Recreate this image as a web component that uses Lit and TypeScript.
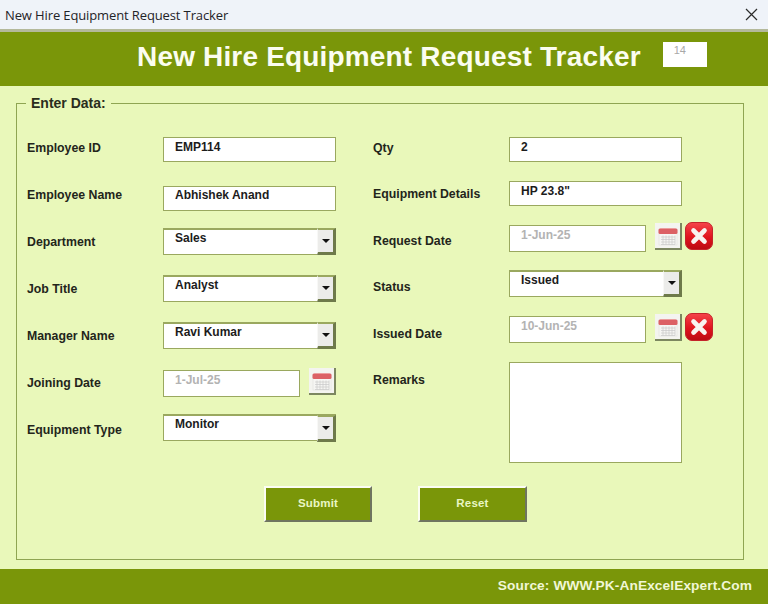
import { LitElement, html, css, svg } from "lit";
import { customElement } from "lit/decorators.js";

type Kind = "text" | "select" | "date" | "date-x" | "area";
interface Field { label: string; value: string; kind: Kind; gap: number; labelTop: number; textTop: number; }

const left: Field[] = [
  { label: "Employee ID", value: "EMP114", kind: "text", gap: 0, labelTop: 3, textTop: 1 },
  { label: "Employee Name", value: "Abhishek Anand", kind: "text", gap: 24, labelTop: 1, textTop: 0 },
  { label: "Department", value: "Sales", kind: "select", gap: 17, labelTop: 6, textTop: 0 },
  { label: "Job Title", value: "Analyst", kind: "select", gap: 20, labelTop: 6, textTop: 0 },
  { label: "Manager Name", value: "Ravi Kumar", kind: "select", gap: 20, labelTop: 6, textTop: 0 },
  { label: "Joining Date", value: "1-Jul-25", kind: "date", gap: 21, labelTop: 5, textTop: 1 },
  { label: "Equipment Type", value: "Monitor", kind: "select", gap: 17, labelTop: 8, textTop: -1 },
];
const right: Field[] = [
  { label: "Qty", value: "2", kind: "text", gap: 0, labelTop: 3, textTop: 1 },
  { label: "Equipment Details", value: 'HP 23.8"', kind: "text", gap: 19, labelTop: 5, textTop: 1 },
  { label: "Request Date", value: "1-Jun-25", kind: "date-x", gap: 19, labelTop: 8, textTop: 1 },
  { label: "Status", value: "Issued", kind: "select", gap: 18, labelTop: 9, textTop: 0 },
  { label: "Issued Date", value: "10-Jun-25", kind: "date-x", gap: 19, labelTop: 10, textTop: 1 },
  { label: "Remarks", value: "", kind: "area", gap: 19, labelTop: 10, textTop: 0 },
];

const calendar = svg`<svg viewBox="0 0 27 27" width="27" height="27">
  <rect x="5" y="7" width="18" height="16" fill="#f6f6f3" stroke="#dcdcd8" stroke-width=".5"/>
  <rect x="4.500" y="6.500" width="19" height="5.500" rx="1.500" fill="#dc6165"/>
  <path d="M6.500 6.500h15" stroke="#ec9a9b" stroke-width=".8"/>
  <path d="M7 15h14M7 17.500h14M7 20h14M7 22.500h14M9 13.500v9M12 13.500v9M15 13.500v9M18 13.500v9M21 13.500v9" stroke="#c8c8c8" stroke-width=".7" fill="none"/>
</svg>`;

const closeX = svg`<svg viewBox="0 0 28 28" width="28" height="28">
  <defs><linearGradient id="rx" x1="0" y1="0" x2="0" y2="1">
    <stop offset="0" stop-color="#f5444a"/><stop offset=".55" stop-color="#e0141d"/><stop offset="1" stop-color="#bb0a13"/>
  </linearGradient></defs>
  <rect x=".5" y=".5" width="27" height="27" rx="6.500" fill="url(#rx)" stroke="#c4242a"/>
  <path d="M8.500 8.500l11 11M19.500 8.500l-11 11" stroke="#f8f3f0" stroke-width="4.600" stroke-linecap="round"/>
</svg>`;

@customElement("app-root")
export class AppRoot extends LitElement {
  static styles = css`
    :host {
      display: flex; flex-direction: column; width: 768px; height: 604px; overflow: hidden;
      background: #e9f8ba; font-family: "Liberation Sans", Arial, sans-serif; color: #1c1c1c;
    }
    .titlebar {
      flex: none; height: 29px; background: #eff3f9; display: flex; align-items: center;
      justify-content: space-between; padding: 0 10px 0 5px; box-sizing: border-box;
      font: 13px/18px "Open Sans", "Noto Sans", sans-serif; color: #1f2328;
      letter-spacing: -0.12px;
    }
    .titlebar svg { display: block; }
    .rule { flex: none; height: 3px; background: #b4b99b; }
    .header {
      flex: none; height: 54px; background: #7a9609; display: flex; align-items: flex-start;
      padding: 10px 0 0 137px; box-sizing: border-box;
    }
    .header h1 {
      margin: 0; font-size: 28px; line-height: 30px; font-weight: 700; color: #fbfdf0;
      letter-spacing: 0.17px; white-space: nowrap;
    }
    .counter {
      width: 44px; height: 25px; margin-left: 22px; background: #fff; box-sizing: border-box;
      padding: 2px 0 0 11px; font-size: 11px; line-height: 13px; color: #a8a8a8;
    }
    .main { flex: 1; padding: 9px 24px 9px 16px; display: flex; min-height: 0; }
    fieldset {
      flex: 1; margin: 0; border: 1px solid #8fa552; padding: 26px 0 0 10px; min-width: 0;
      box-sizing: border-box;
    }
    legend {
      margin-left: -1px; padding: 0 5px; font-size: 14px; line-height: 16px; font-weight: 700;
      color: #2a2d1c;
    }
    .cols { display: flex; align-items: flex-start; }
    .col { width: 346px; display: flex; flex-direction: column; flex: none; }
    .row { display: flex; align-items: flex-start; }
    .label {
      width: 136px; flex: none; font-size: 12.300px; line-height: 16px; font-weight: 700;
      color: #23251b; white-space: nowrap; height: 16px; margin-bottom: -16px;
    }
    .box {
      box-sizing: border-box; background: #fff; border: 1px solid #9aa85f; height: 25px; width: 173px;
      padding: 0 0 0 11px; font-size: 12px; line-height: 16px; font-weight: 700; color: #1c1c1c;
      white-space: nowrap;
    }
    .select {
      height: 27px; display: flex; justify-content: space-between;
      border-top-width: 2px;
    }
    .arrow {
      width: 19px; height: 27px; flex: none; margin: -2px -1px 0 0; box-sizing: border-box;
      background: #ececea; border-right: 3px solid #6e7a4a; border-bottom: 3px solid #6e7a4a;
      border-left: 1px solid #f8f8f6; border-top: 2px solid #9aa85f;
      display: flex; align-items: center; justify-content: center;
    }
    .arrow i {
      display: block; width: 0; height: 0; border: 4px solid transparent; border-top: 4px solid #111;
      border-bottom-width: 0;
    }
    .date { width: 137px; height: 27px; color: #b3b3b3; }
    .controls { display: flex; align-items: flex-start; }
    .cal {
      width: 27px; height: 27px; margin: -2px 0 0 9px; flex: none; box-sizing: border-box;
      background: #f4f4f0; border-right: 2px solid #7c8760; border-bottom: 2px solid #7c8760;
      display: flex; overflow: hidden;
    }
    .cal svg { display: block; flex: none; margin: -1px; }
    .xbtn { margin: -3px 0 0 3px; width: 28px; height: 28px; flex: none; }
    .xbtn svg { display: block; }
    .area { height: 101px; }
    .actions { display: flex; gap: 46px; padding: 23px 0 0 237px; }
    button {
      width: 108px; height: 36px; box-sizing: border-box; background: #7a9609; color: #e9f6c4;
      border: 2px solid; border-color: #fbfdf2 #6f7560 #6f7560 #fbfdf2;
      font: 700 11.500px "Liberation Sans", Arial, sans-serif; padding: 0 0 2px; letter-spacing: 0.2px;
    }
    button + button { width: 109px; }
    .footer {
      flex: none; height: 35px; background: #7a9609; color: #f1f7d6; display: flex; align-items: center;
      justify-content: flex-end; padding: 0 16px 3px 0; box-sizing: border-box;
      font-size: 13.700px; font-weight: 700; letter-spacing: 0.1px;
    }
  `;

  private control(f: Field) {
    const top = `padding-top:${f.textTop}px`;
    switch (f.kind) {
      case "select":
        return html`<div class="box select" style=${top}><span>${f.value}</span><span class="arrow" style="margin-top:${-2 - f.textTop}px"><i></i></span></div>`;
      case "date":
        return html`<div class="controls"><div class="box date" style=${top}>${f.value}</div><div class="cal">${calendar}</div></div>`;
      case "date-x":
        return html`<div class="controls"><div class="box date" style=${top}>${f.value}</div><div class="cal">${calendar}</div><div class="xbtn">${closeX}</div></div>`;
      case "area":
        return html`<div class="box area"></div>`;
      default:
        return html`<div class="box" style=${top}>${f.value}</div>`;
    }
  }

  private column(fields: Field[]) {
    return html`<div class="col">
      ${fields.map(f => html`<div class="row" style="margin-top:${f.gap}px">
        <div class="label" style="margin-top:${f.labelTop}px">${f.label}</div>
        ${this.control(f)}
      </div>`)}
    </div>`;
  }

  render() {
    return html`
      <div class="titlebar">
        <span>New Hire Equipment Request Tracker</span>
        <svg width="13" height="13" viewBox="0 0 13 13"><path d="M1 1l11 11M12 1L1 12" stroke="#2b2b2b" stroke-width="1.200" fill="none"/></svg>
      </div>
      <div class="rule"></div>
      <div class="header">
        <h1>New Hire Equipment Request Tracker</h1>
        <div class="counter">14</div>
      </div>
      <div class="main">
        <fieldset>
          <legend>Enter Data:</legend>
          <div class="cols">${this.column(left)}${this.column(right)}</div>
          <div class="actions"><button>Submit</button><button>Reset</button></div>
        </fieldset>
      </div>
      <div class="footer">Source: WWW.PK-AnExcelExpert.Com</div>
    `;
  }
}
